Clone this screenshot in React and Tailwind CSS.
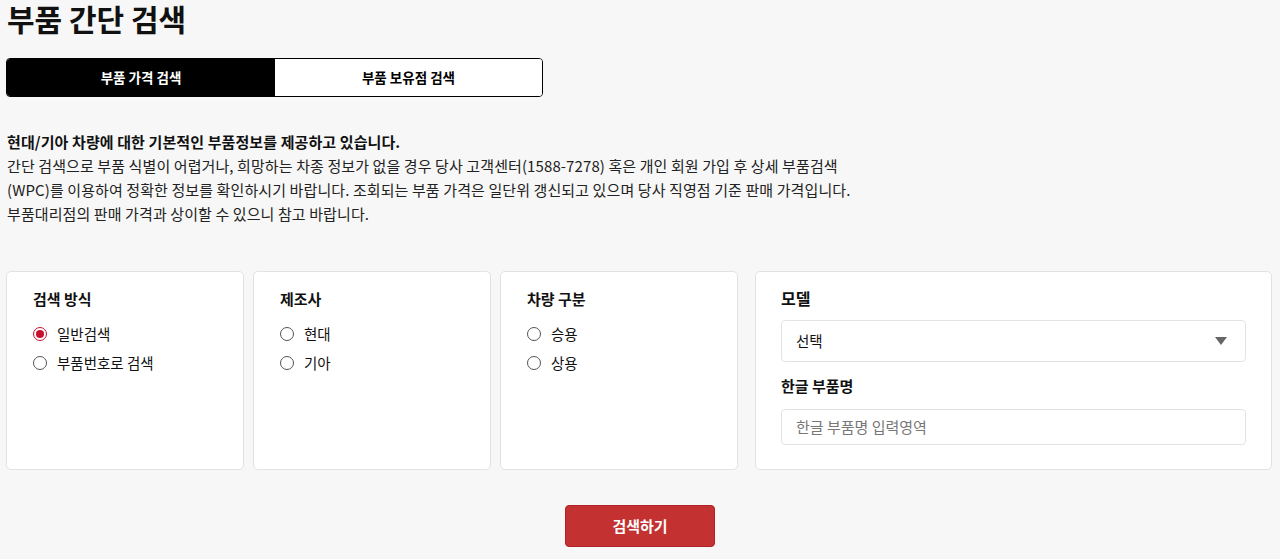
import React from "react";

function Radio({ checked, label }) {
  return (
    <label className="flex items-center h-[20px] text-[14.5px] text-[#111]">
      <span
        className={
          "w-[14px] h-[14px] rounded-full border flex items-center justify-center bg-white " +
          (checked ? "border-[#c8102e]" : "border-[#555]")
        }
      >
        {checked && <span className="w-[8px] h-[8px] rounded-full bg-[#c8102e]" />}
      </span>
      <span className="ml-[10px]">{label}</span>
    </label>
  );
}

function RadioCard({ title, options, className }) {
  return (
    <div className={"h-[199px] bg-white border border-[#e2e2e2] rounded-[5px] pl-[26px] pt-[17px] " + className}>
      <div className="text-[15px] leading-[20px] font-bold text-[#111]">{title}</div>
      <div className="mt-[15px] flex flex-col gap-[9px]">
        {options.map((o) => (
          <Radio key={o} checked={o === "일반검색"} label={o} />
        ))}
      </div>
    </div>
  );
}

export default function App() {
  return (
    <div
      className="min-h-[560px] bg-[#f7f7f7] pl-[6px] text-[#111]"
      style={{ fontFamily: '"Noto Sans CJK KR", "Noto Sans", sans-serif' }}
    >
      <h1 className="text-[30px] leading-[38px] font-bold pl-[1px] -mt-[1px]">부품 간단 검색</h1>

      <div className="mt-[21px] flex w-[537px] h-[39px] rounded-[4px] border border-black overflow-hidden">
        <div className="w-[268px] bg-black text-white flex items-center justify-center text-[13.5px] font-bold">
          부품 가격 검색
        </div>
        <div className="flex-1 bg-white text-black flex items-center justify-center text-[13.5px] font-bold">
          부품 보유점 검색
        </div>
      </div>

      <div className="mt-[33px] pl-[1px] text-[15px] leading-[24px] tracking-[0.1px] text-[#222]">
        <p className="font-bold text-[#111]">현대/기아 차량에 대한 기본적인 부품정보를 제공하고 있습니다.</p>
        <p>간단 검색으로 부품 식별이 어렵거나, 희망하는 차종 정보가 없을 경우 당사 고객센터(1588-7278) 혹은 개인 회원 가입 후 상세 부품검색</p>
        <p>(WPC)를 이용하여 정확한 정보를 확인하시기 바랍니다. 조회되는 부품 가격은 일단위 갱신되고 있으며 당사 직영점 기준 판매 가격입니다.</p>
        <p>부품대리점의 판매 가격과 상이할 수 있으니 참고 바랍니다.</p>
      </div>

      <div className="mt-[45px] flex">
        <RadioCard className="w-[238px]" title="검색 방식" options={["일반검색", "부품번호로 검색"]} />
        <RadioCard className="w-[238px] ml-[9px]" title="제조사" options={["현대", "기아"]} />
        <RadioCard className="w-[238px] ml-[9px]" title="차량 구분" options={["승용", "상용"]} />
        <div className="w-[517px] ml-[17px] h-[199px] bg-white border border-[#e2e2e2] rounded-[5px] px-[25px] pt-[16px]">
          <div className="text-[16px] leading-[20px] font-bold">모델</div>
          <div className="mt-[12px] h-[42px] border border-[#e3e3e3] rounded-[4px] flex items-center justify-between pl-[14px] pr-[18px] text-[14.5px] text-[#111]">
            <span>선택</span>
            <svg width="12" height="8" viewBox="0 0 12 8">
              <path d="M0 0 H12 L6 8 Z" fill="#666" />
            </svg>
          </div>
          <div className="mt-[14px] text-[15px] leading-[20px] font-bold">한글 부품명</div>
          <div className="mt-[13px] h-[36px] border border-[#e3e3e3] rounded-[4px] flex items-center pl-[14px] text-[15px] text-[#777]">
            한글 부품명 입력영역
          </div>
        </div>
      </div>

      <div className="mt-[35px] flex pl-[559px]">
        <button className="w-[150px] h-[42px] rounded-[4px] bg-[#c33131] border border-[#b0222a] text-white text-[15px] font-bold">
          검색하기
        </button>
      </div>
    </div>
  );
}
